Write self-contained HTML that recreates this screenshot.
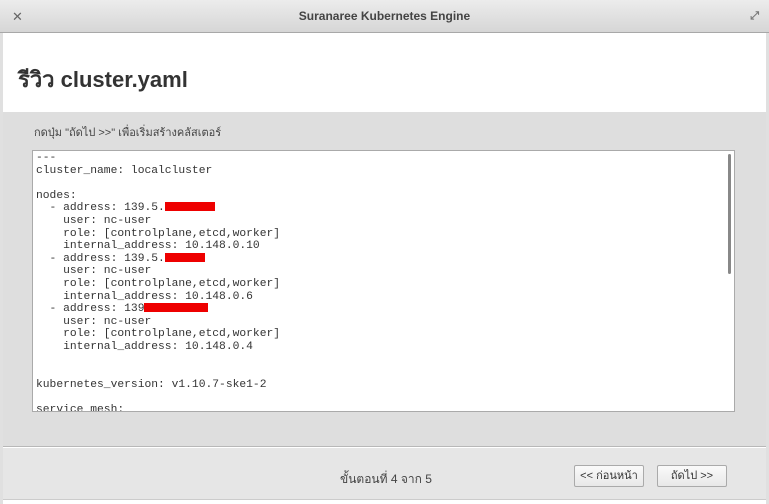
<!DOCTYPE html>
<html><head><meta charset="utf-8"><style>
*{margin:0;padding:0;box-sizing:border-box}
body{width:769px;height:504px;background:#fff;font-family:"Liberation Sans","Noto Sans CJK SC",sans-serif;position:relative;overflow:hidden}
.tb{position:absolute;left:0;top:0;width:769px;height:33px;background:linear-gradient(#ececec,#d6d6d6);border-bottom:1px solid #a8a8a8;font-size:12px;color:#444;text-align:center;line-height:33px;font-weight:bold}
.x{position:absolute;left:12px;top:0;color:#666;font-weight:normal;font-size:13px}
.mx{position:absolute;right:10px;top:0;color:#777;font-size:11px}
.hdr{position:absolute;left:3px;top:34px;width:763px;height:78px;background:#fff}
.hdr h1{position:absolute;left:15px;top:28px;font-size:22px;color:#333;font-weight:bold}
.main{position:absolute;left:3px;top:112px;width:763px;height:335px;background:#dedede;border-bottom:1px solid #b8b8b8}
.note{position:absolute;left:31px;top:11px;font-size:11px;color:#444}
.box{position:absolute;left:29px;top:38px;width:703px;height:262px;background:#fff;border:1px solid #aaa;overflow:hidden}
pre{font-family:"Liberation Mono",monospace;font-size:11.3px;line-height:12.6px;color:#333;padding:1px 0 0 3px}
.r{display:inline-block;background:#e00;height:9px;vertical-align:-1px}
.sb{position:absolute;right:3px;top:3px;width:3px;height:120px;background:#888;border-radius:2px}
.ft{position:absolute;left:3px;top:448px;width:763px;height:52px;background:#e6e6e6;border-bottom:1px solid #ccc}
.st{position:absolute;left:337px;top:22px;font-size:12px;color:#444}
.btn{position:absolute;top:17px;height:22px;border:1px solid #aaa;background:linear-gradient(#fafafa,#e8e8e8);font-size:11px;color:#333;line-height:20px;text-align:center;border-radius:2px}
.edge{position:absolute;top:33px;width:3px;height:471px;background:#e0e0e0}
</style></head><body>
<div class="tb"><span class="x">✕</span>Suranaree Kubernetes Engine<span class="mx">⤢</span></div>
<div class="edge" style="left:0"></div><div class="edge" style="right:0"></div>
<div class="hdr"><h1>รีวิว cluster.yaml</h1></div>
<div class="main">
<div class="note">กดปุ่ม "ถัดไป &gt;&gt;" เพื่อเริ่มสร้างคลัสเตอร์</div>
<div class="box"><pre>---
cluster_name: localcluster

nodes:
  - address: 139.5.<span class="r" style="width:50px"></span>
    user: nc-user
    role: [controlplane,etcd,worker]
    internal_address: 10.148.0.10
  - address: 139.5.<span class="r" style="width:40px"></span>
    user: nc-user
    role: [controlplane,etcd,worker]
    internal_address: 10.148.0.6
  - address: 139<span class="r" style="width:64px"></span>
    user: nc-user
    role: [controlplane,etcd,worker]
    internal_address: 10.148.0.4


kubernetes_version: v1.10.7-ske1-2

service_mesh:</pre><div class="sb"></div></div>
</div>
<div class="ft">
<div class="st">ขั้นตอนที่ 4 จาก 5</div>
<div class="btn" style="left:571px;width:70px">&lt;&lt; ก่อนหน้า</div>
<div class="btn" style="left:654px;width:70px">ถัดไป &gt;&gt;</div>
</div>
</body></html>
